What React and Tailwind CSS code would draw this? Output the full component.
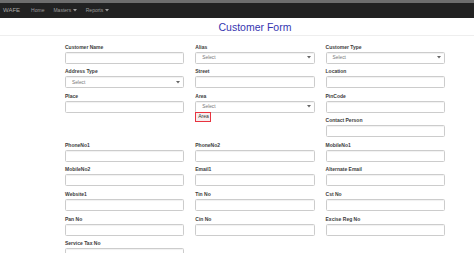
import React from "react";

const Caret = ({ className = "" }) => (
    <svg width="4" height="3" viewBox="0 0 4 3" className={className}>
        <path d="M0 0 L4 0 L2 2.4 Z" fill="currentColor" />
    </svg>
);

function Field({ label, select, error, className = "" }) {
    return (
        <div className={"relative h-[24.6px] " + className}>
            <label className="block text-[5px] leading-[6px] font-bold text-[#3c3c3c] mb-[2px]">
                {label}
            </label>
            {select ? (
                <div className="h-[12px] border border-[#ccc] rounded-[1.5px] bg-white flex items-center justify-between px-[6px] shadow-[inset_0_1px_1px_rgba(0,0,0,0.06)]">
                    <span className="text-[4.8px] text-[#777]">Select</span>
                    <Caret className="text-[#666] -mr-[3px]" />
                </div>
            ) : (
                <div className="h-[12px] border border-[#ccc] rounded-[1.5px] bg-white shadow-[inset_0_1px_1px_rgba(0,0,0,0.06)]" />
            )}
            {error && (
                <div className="absolute left-0 top-[19px] h-[10px] w-[16px] pl-[2px] border border-solid border-[#e8333f] bg-[#f6eeee] flex items-center text-[5px] font-normal text-[#333]">
                    {error}
                </div>
            )}
        </div>
    );
}

export default function App() {
    return (
        <div className="w-[474px] h-[253px] overflow-hidden bg-white font-['Liberation_Sans',Arial,sans-serif]">
            <nav className="h-[18px] bg-[#222] border-t-[3px] border-[#6e6e6e] flex items-center text-[5px] text-[#9d9d9d]">
                <span className="ml-[3px] text-[6px] text-[#a8a8a8]">WAFE</span>
                <span className="ml-[11px]">Home</span>
                <span className="ml-[9px] flex items-center gap-[1.5px]">
                    Masters <Caret />
                </span>
                <span className="ml-[9px] flex items-center gap-[1.5px]">
                    Reports <Caret />
                </span>
            </nav>

            <div className="ml-[65px] w-[380px] h-[17px] flex items-center justify-center">
                <h1 className="text-[10.5px] text-[#3535b0] leading-none pt-[1px]">Customer Form</h1>
            </div>
            <div className="h-px bg-[#eee]" />

            <div className="ml-[65px] w-[380px] mt-[7.5px] grid grid-cols-3 gap-x-[10.8px]">
                <Field label="Customer Name" />
                <Field label="Alias" select />
                <Field label="Customer Type" select />

                <Field label="Address Type" select />
                <Field label="Street" />
                <Field label="Location" />

                <Field label="Place" />
                <Field label="Area" select error="Area" />
                <Field label="PinCode" />

                <Field label="Contact Person" className="col-start-3" />

                <Field label="PhoneNo1" />
                <Field label="PhoneNo2" />
                <Field label="MobileNo1" />

                <Field label="MobileNo2" />
                <Field label="Email1" />
                <Field label="Alternate Email" />

                <Field label="Website1" />
                <Field label="Tin No" />
                <Field label="Cst No" />

                <Field label="Pan No" />
                <Field label="Cin No" />
                <Field label="Excise Reg No" />

                <Field label="Service Tax No" />
            </div>
        </div>
    );
}
